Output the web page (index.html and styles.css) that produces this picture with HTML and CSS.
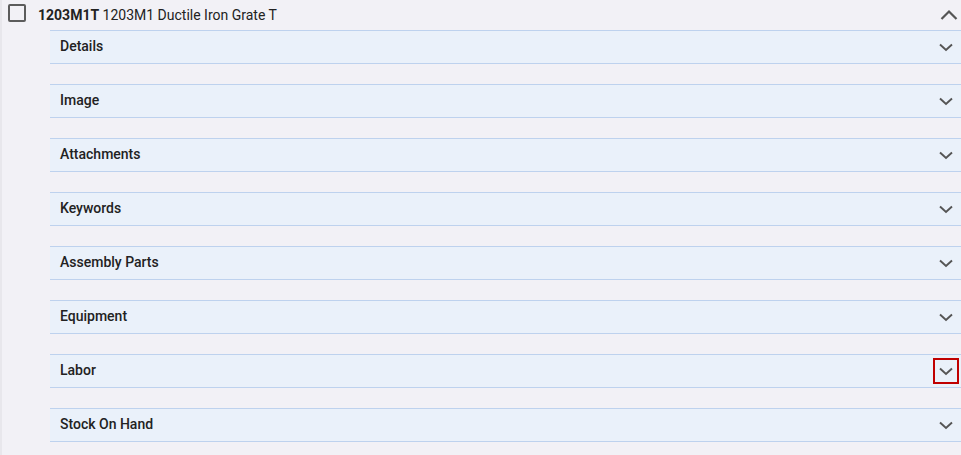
FILE: index.html
```html
<!DOCTYPE html>
<html>
<head>
<meta charset="utf-8">
<link rel="stylesheet" href="styles.css">
</head>
<body>
<div class="page">
  <div class="item-header">
    <span class="checkbox"></span>
    <span class="item-title"><b>1203M1T</b> 1203M1 Ductile Iron Grate T</span>
    <span class="collapse-btn">
      <svg width="24" height="24" viewBox="0 0 24 24"><path d="M4.5 16 L12 8.5 L19.5 16" fill="none" stroke="#555" stroke-width="2.2"/></svg>
    </span>
  </div>
  <div class="sections">
    <div class="section"><span class="label">Details</span><span class="exp"><svg width="24" height="24" viewBox="0 0 24 24"><path d="M6 9.5 L12 15 L18 9.5" fill="none" stroke="#555" stroke-width="1.9"/></svg></span></div>
    <div class="section"><span class="label">Image</span><span class="exp"><svg width="24" height="24" viewBox="0 0 24 24"><path d="M6 9.5 L12 15 L18 9.5" fill="none" stroke="#555" stroke-width="1.9"/></svg></span></div>
    <div class="section"><span class="label">Attachments</span><span class="exp"><svg width="24" height="24" viewBox="0 0 24 24"><path d="M6 9.5 L12 15 L18 9.5" fill="none" stroke="#555" stroke-width="1.9"/></svg></span></div>
    <div class="section"><span class="label">Keywords</span><span class="exp"><svg width="24" height="24" viewBox="0 0 24 24"><path d="M6 9.5 L12 15 L18 9.5" fill="none" stroke="#555" stroke-width="1.9"/></svg></span></div>
    <div class="section"><span class="label">Assembly Parts</span><span class="exp"><svg width="24" height="24" viewBox="0 0 24 24"><path d="M6 9.5 L12 15 L18 9.5" fill="none" stroke="#555" stroke-width="1.9"/></svg></span></div>
    <div class="section"><span class="label">Equipment</span><span class="exp"><svg width="24" height="24" viewBox="0 0 24 24"><path d="M6 9.5 L12 15 L18 9.5" fill="none" stroke="#555" stroke-width="1.9"/></svg></span></div>
    <div class="section"><span class="label">Labor</span><span class="exp focused"><svg width="24" height="24" viewBox="0 0 24 24"><path d="M6 9.5 L12 15 L18 9.5" fill="none" stroke="#555" stroke-width="1.9"/></svg></span></div>
    <div class="section"><span class="label">Stock On Hand</span><span class="exp"><svg width="24" height="24" viewBox="0 0 24 24"><path d="M6 9.5 L12 15 L18 9.5" fill="none" stroke="#555" stroke-width="1.9"/></svg></span></div>
  </div>
</div>
</body>
</html>
```
FILE: styles.css
```css
html, body {
  margin: 0;
  padding: 0;
  background: #f2f1f6;
  font-family: Roboto, "Liberation Sans", Arial, sans-serif;
  color: #222;
}
.page {
  border-left: 2px solid #e8e7ec;
  height: 455px;
  box-sizing: border-box;
  overflow: hidden;
}
.item-header {
  display: flex;
  align-items: center;
  height: 30px;
  padding-left: 6px;
}
.checkbox {
  width: 18px;
  height: 18px;
  box-sizing: border-box;
  border: 2px solid #5c5c5c;
  border-radius: 2px;
  margin-bottom: 4px;
  flex: none;
}
.item-title {
  margin-left: 12px;
  font-size: 14px;
  line-height: 30px;
  padding-bottom: 1px;
  flex: 1;
}
.item-title b {
  font-weight: 700;
}
.collapse-btn {
  width: 24px;
  height: 24px;
  display: flex;
  margin-bottom: 1px;
}
.sections {
  margin-left: 48px;
  display: flex;
  flex-direction: column;
  gap: 20px;
}
.section {
  display: flex;
  align-items: center;
  height: 32px;
  border-top: 1px solid #bed2ee;
  border-bottom: 1px solid #bed2ee;
  background: #eaf1fa;
  padding-left: 10px;
}
.label {
  flex: 1;
  font-size: 14px;
  font-weight: 500;
  padding-bottom: 2px;
}
.exp {
  width: 24px;
  height: 24px;
  margin-right: 3px;
  display: flex;
  box-sizing: border-box;
}
.exp.focused {
  outline: 2px solid #c00000;
  outline-offset: -1px;
}
```
